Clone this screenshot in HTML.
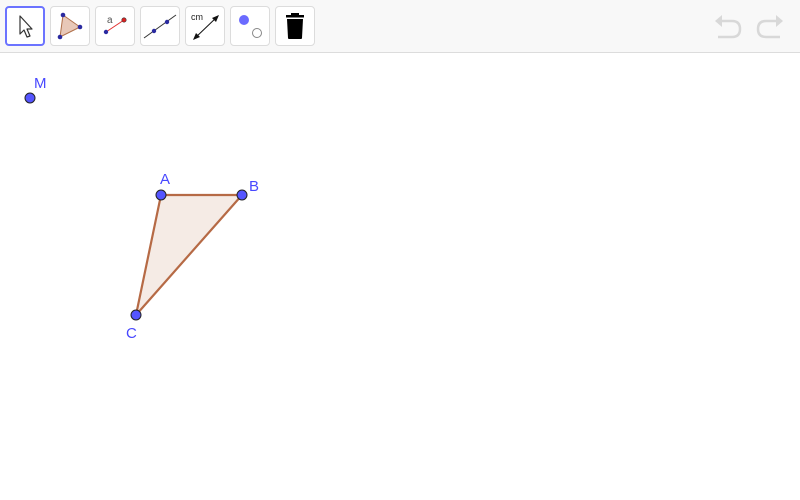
<!DOCTYPE html>
<html><head><meta charset="utf-8"><style>
html,body{margin:0;padding:0;width:800px;height:500px;overflow:hidden;background:#fff;font-family:"Liberation Sans",sans-serif}
#tb{position:absolute;left:0;top:0;width:800px;height:52px;background:#f8f8f8;border-bottom:1px solid #dcdcdc}
.b{position:absolute;top:6px;width:38px;height:38px;background:#fff;border:1px solid #dcdcdc;border-radius:4px}
.b svg{position:absolute;left:0;top:0}
</style></head><body>
<div id="tb">
<div class="b" style="left:5px;border:2px solid #6b73ff;width:36px;height:36px;top:6px"><svg width="36" height="36"><path d="M13 8 L13 26 L17 22 L20 29 L23 28 L20 21 L25 21 Z" fill="#fff" stroke="#333" stroke-width="1.2" stroke-linejoin="round"/></svg></div>
<div class="b" style="left:50px"><svg width="38" height="38"><polygon points="12,8 29,20 9,30" fill="#e8c8b8" stroke="#b0704a" stroke-width="1"/><circle cx="12" cy="8" r="2.3" fill="#2a2aa0"/><circle cx="29" cy="20" r="2.3" fill="#2a2aa0"/><circle cx="9" cy="30" r="2.3" fill="#2a2aa0"/></svg></div>
<div class="b" style="left:95px"><svg width="38" height="38"><text x="11" y="16" font-size="10" fill="#555" font-family="Liberation Sans">a</text><line x1="10" y1="25" x2="28" y2="13" stroke="#e03030" stroke-width="1"/><circle cx="10" cy="25" r="2.2" fill="#2a2aa0"/><circle cx="28" cy="13" r="2.2" fill="#e02020" stroke="#333" stroke-width=".6"/></svg></div>
<div class="b" style="left:140px"><svg width="38" height="38"><line x1="3" y1="31" x2="35" y2="8" stroke="#333" stroke-width="1"/><circle cx="13" cy="24" r="2.2" fill="#2a2aa0"/><circle cx="26" cy="15" r="2.2" fill="#2a2aa0"/></svg></div>
<div class="b" style="left:185px"><svg width="38" height="38"><text x="5" y="13" font-size="9" fill="#222" font-family="Liberation Sans">cm</text><line x1="8" y1="32" x2="32" y2="9" stroke="#111" stroke-width="1"/><polygon points="33,8 26,11 30,15" fill="#111"/><polygon points="7,33 10,26 14,30" fill="#111"/></svg></div>
<div class="b" style="left:230px"><svg width="38" height="38"><circle cx="13" cy="13" r="5" fill="#6b6bff"/><circle cx="26" cy="26" r="4.5" fill="#fff" stroke="#888" stroke-width="1"/></svg></div>
<div class="b" style="left:275px"><svg width="38" height="38"><rect x="10" y="8" width="18" height="2.5" fill="#000"/><rect x="15" y="6" width="8" height="3" fill="#000"/><path d="M11 12 H27 L26 31 Q26 32 25 32 H13 Q12 32 12 31 Z" fill="#000"/></svg></div>
<svg style="position:absolute;left:712px;top:12px" width="80" height="30"><path d="M8 9 H20 Q28 9 28 17 Q28 25 20 25 H6" fill="none" stroke="#d8d8d8" stroke-width="2.5"/><polygon points="3,9 10,3 10,15" fill="#d8d8d8"/><path d="M66 9 H54 Q46 9 46 17 Q46 25 54 25 H68" fill="none" stroke="#d8d8d8" stroke-width="2.5"/><polygon points="71,9 64,3 64,15" fill="#d8d8d8"/></svg>
</div>
<svg style="position:absolute;left:0;top:0" width="800" height="500">
<polygon points="161,195 242,195 136,315" fill="#f5ebe5" stroke="#b66a45" stroke-width="2.2" stroke-linejoin="round"/>
<g fill="#5555ff" stroke="#222" stroke-width="1">
<circle cx="30" cy="98" r="5"/><circle cx="161" cy="195" r="5"/><circle cx="242" cy="195" r="5"/><circle cx="136" cy="315" r="5"/></g>
<g fill="#4848ff" font-family="Liberation Sans" font-size="15">
<text x="34" y="88">M</text><text x="160" y="184">A</text><text x="249" y="191">B</text><text x="126" y="338">C</text></g>
</svg>
</body></html>
